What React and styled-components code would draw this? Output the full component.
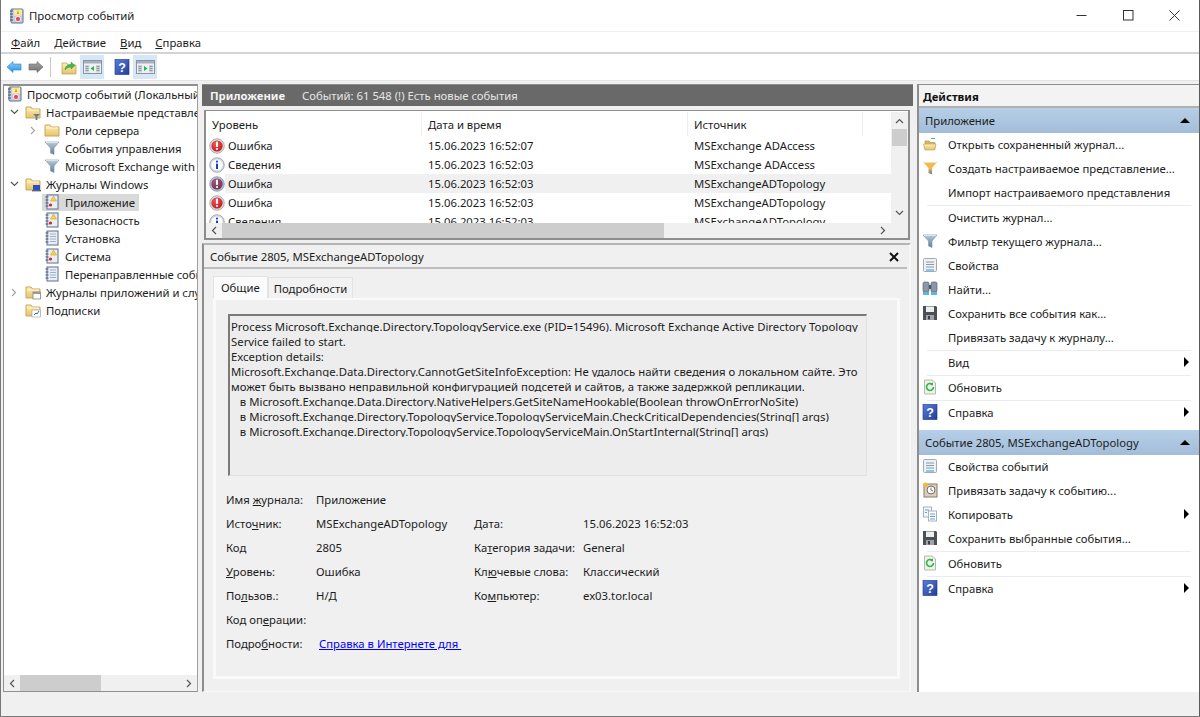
import React from 'react'
import styled, { createGlobalStyle } from 'styled-components'

const Global = createGlobalStyle`
  html, body { margin: 0; padding: 0; height: 100%; overflow: hidden; }
  body {
    font-family: "Noto Sans", "Open Sans", sans-serif;
    font-size: 11.3px;
    color: #1c1c1c;
    background: #f0f0f0;
  }
  u { text-underline-offset: 1px; }
`

const Win = styled.div`
  width: 1200px;
  height: 717px;
  display: flex;
  flex-direction: column;
  background: #f0f0f0;
  box-sizing: border-box;
  border-left: 1px solid #777;
  border-right: 1px solid #5a5a5a;
  border-bottom: 1px solid #7a7a7a;
  overflow: hidden;
`
const TitleBar = styled.div`
  height: 32px;
  flex: none;
  display: flex;
  align-items: center;
  padding-left: 8px;
  background: #fff;
  border-bottom: 1px solid #f0f0f0;
  box-sizing: border-box;
`
const TitleText = styled.span`
  margin-left: 4px;
  flex: 1;
  font-size: 11.4px;
`
const WinButtons = styled.div`
  display: flex;
  margin-right: 1px;
`
const WinButton = styled.div`
  width: 46.5px;
  height: 30px;
  display: flex;
  align-items: center;
  justify-content: center;
`
const MenuBar = styled.div`
  height: 22px;
  flex: none;
  display: flex;
  align-items: center;
  gap: 14px;
  padding-left: 10px;
  background: #fff;
  border-bottom: 2px solid #d4d4d4;
  box-sizing: border-box;
`
const Toolbar = styled.div`
  height: 27px;
  flex: none;
  display: flex;
  align-items: center;
  padding-left: 4px;
  background: #fff;
  border-bottom: 1px solid #e4e4e4;
  box-sizing: border-box;
`
const ToolIcon = styled.div`
  width: ${p => p.$w || 22}px;
  height: 24px;
  flex: none;
  display: flex;
  align-items: center;
  justify-content: center;
  background: ${p => (p.$on ? '#d6e8f8' : 'transparent')};
`
const ToolSep = styled.div`
  width: 1px;
  height: 20px;
  margin: 0 6px 0 2px;
  background: #c8c8c8;
`
const ToolGap = styled.div`
  width: ${p => p.$w}px;
  flex: none;
`
const Main = styled.div`
  flex: 1;
  min-height: 0;
  display: grid;
  grid-template-columns: 195px 711px 282px;
  column-gap: 4px;
  padding: 3px 0 0 2px;
  box-sizing: border-box;
`

/* left tree */
const TreePane = styled.div`
  height: 609px;
  display: flex;
  flex-direction: column;
  background: #fff;
  border: 1px solid #8f8f8f;
  border-top-width: 2px;
  border-bottom-width: 2px;
  border-right-color: #a0a0a0;
  box-sizing: border-box;
  overflow: hidden;
`
const TreeBody = styled.div`
  flex: 1;
  overflow: hidden;
`
const TreeRow = styled.div`
  height: 18px;
  display: flex;
  align-items: center;
  white-space: nowrap;
  padding: 0 0 2px ${p => p.$level * 19 + 2}px;
  box-sizing: border-box;
`
const Chevron = styled.div`
  width: 16px;
  height: 16px;
  margin-right: 1px;
  flex: none;
  display: flex;
  align-items: center;
  justify-content: center;
`
const TreeNode = styled.div`
  display: flex;
  align-items: center;
  gap: ${p => (p.$root ? 4 : 5)}px;
  height: 17px;
  padding: 0 ${p => (p.$sel ? 4 : 2)}px 0 ${p => (p.$root ? 1 : 2)}px;
  background: ${p => (p.$sel ? '#d9d9d9' : 'transparent')};
`
const HScroll = styled.div`
  height: ${p => p.$h}px;
  flex: none;
  display: flex;
  align-items: center;
  background: #f0f0f0;
`
const ScrollBtn = styled.div`
  width: 16px;
  height: 100%;
  flex: none;
  display: flex;
  align-items: center;
  justify-content: center;
`
const ScrollThumb = styled.div`
  height: 100%;
  flex: none;
  width: ${p => p.$w}px;
  background: #cdcdcd;
`
const Spacer = styled.div`
  flex: 1;
`

/* center */
const Center = styled.div`
  display: flex;
  flex-direction: column;
  height: 609px;
  min-width: 0;
`
const DarkBar = styled.div`
  height: 22px;
  flex: none;
  display: flex;
  align-items: center;
  gap: 17px;
  padding-left: 8px;
  background: #696969;
  color: #e6e6e6;
  border-top: 1px solid #8a8a8a;
  box-sizing: border-box;
`
const DarkTitle = styled.b`
  color: #f4f4f4;
  font-weight: 700;
`
const ListPane = styled.div`
  height: 130px;
  margin: 4px 3px 0 2px;
  flex: none;
  display: grid;
  grid-template-columns: 1fr 17px;
  grid-template-rows: 1fr 15px;
  background: #fff;
  border: 2px solid #8d8d8d;
  border-top: 1px solid #8d8d8d;
  padding-top: 1px;
  box-sizing: border-box;
`
const ListBody = styled.div`
  overflow: hidden;
  min-width: 0;
  min-height: 0;
`
const ListHead = styled.div`
  height: 24px;
  display: grid;
  grid-template-columns: 216px 266px 175px;
  align-items: start;
`
const HeadCell = styled.div`
  height: 24px;
  line-height: 26px;
  padding-left: 6px;
  border-right: 1px solid #eeeeee;
`
const ListRow = styled.div`
  height: 19px;
  display: grid;
  grid-template-columns: 216px 266px 1fr;
  align-items: center;
  white-space: nowrap;
`
const LevelCell = styled.div`
  display: flex;
  align-items: center;
  height: 19px;
  padding-left: 3px;
`
const LevelText = styled.span`
  flex: 1;
  padding-left: 3px;
  line-height: 19px;
  background: ${p => (p.$hl ? '#f0f0f0' : 'transparent')};
`
const Cell = styled.div`
  height: 19px;
  line-height: 19px;
  padding-left: 6px;
  background: ${p => (p.$hl ? '#f0f0f0' : 'transparent')};
`
const VScroll = styled.div`
  grid-row: 1 / 3;
  grid-column: 2;
  display: flex;
  flex-direction: column;
  align-items: center;
  background: #f0f0f0;
`
const VBtn = styled.div`
  height: 17px;
  width: 17px;
  flex: none;
  display: flex;
  align-items: center;
  justify-content: center;
`
const VThumb = styled.div`
  width: 15px;
  height: 17px;
  flex: none;
  background: #cdcdcd;
`

const DetailPane = styled.div`
  height: 449px;
  flex: none;
  margin: 3px 2px 0 0;
  display: flex;
  flex-direction: column;
  padding: 0 9px 0 0;
  background: #f0f0f0;
  border-left: 2px solid #8d8d8d;
  border-top: 2px solid #b4b4b4;
  border-right: 2px solid #f6f6f6;
  border-bottom: 1px solid #f8f8f8;
  box-sizing: border-box;
`
const DetailHead = styled.div`
  height: 21px;
  flex: none;
  display: flex;
  align-items: center;
  justify-content: space-between;
  padding: 1px 0 0 6px;
  margin-right: -7px;
  border-bottom: 2px solid #bdbdbd;
  box-sizing: content-box;
`
const CloseX = styled.div`
  width: 14px;
  height: 14px;
  display: flex;
  align-items: center;
  justify-content: center;
  margin-right: 6px;
`
const Tabs = styled.div`
  display: flex;
  align-items: flex-end;
  height: 22px;
  flex: none;
  margin: 7px 0 0 9px;
`
const Tab = styled.div`
  height: ${p => (p.$active ? 22 : 21)}px;
  line-height: ${p => (p.$active ? 21 : 22)}px;
  padding: 0 ${p => (p.$active ? 7 : 5)}px;
  background: ${p => (p.$active ? '#fbfbfb' : '#f2f2f2')};
  border: 1px solid #e3e3e3;
  border-bottom: 0;
  box-sizing: border-box;
`
const TabBody = styled.div`
  height: 381px;
  flex: none;
  margin-left: 9px;
  padding: 14px 0 0 12px;
  background: #f0f0f0;
  border: 1px solid #e6e6e6;
  border-right: 3px solid #fafafa;
  border-bottom: 3px solid #fafafa;
  border-left: 3px solid #fafafa;
  border-top: 2px solid #fafafa;
  box-sizing: border-box;
`
const MessageBox = styled.div`
  width: 639px;
  height: 162px;
  padding: 1px 1px 0 1px;
  background: #ededed;
  border: 1px solid #e2e2e2;
  border-top: 2px solid #7a7a7a;
  border-left: 2px solid #7a7a7a;
  box-sizing: border-box;
`
const MsgLine = styled.div`
  height: 15px;
  padding-top: 2px;
  line-height: 15px;
  font-size: 11.35px;
  white-space: pre;
  overflow: hidden;
  box-sizing: border-box;
`
const Fields = styled.div`
  display: grid;
  grid-template-columns: 90px 158px 109px 1fr;
  grid-auto-rows: 24px;
  align-items: center;
  margin: 11px 0 0 -2px;
  white-space: nowrap;
`
const Wide = styled.div`
  grid-column: 2 / 5;
`
const HelpLink = styled.a`
  color: #0000ff;
  text-decoration: underline;
  margin-left: 3px;
`

/* right */
const ActionsPane = styled.div`
  height: 609px;
  display: flex;
  flex-direction: column;
  background: #fff;
  border-left: 2px solid #8d8d8d;
  border-top: 1px solid #8d8d8d;
  box-sizing: border-box;
`
const ActionsTitle = styled.div`
  height: 19px;
  flex: none;
  display: flex;
  align-items: center;
  padding: 2px 0 0 4px;
  background: #f3f3f3;
  font-weight: 700;
  color: #111;
  border-bottom: 2px solid #b0b0b0;
  box-sizing: content-box;
`
const SectionHead = styled.div`
  height: 25px;
  flex: none;
  display: flex;
  align-items: center;
  justify-content: space-between;
  padding: 0 8px 0 6px;
  box-sizing: border-box;
  background: linear-gradient(#b6cfe8, #a3bdd9);
`
const Caret = styled.div`
  width: 0;
  height: 0;
  border-left: 5px solid transparent;
  border-right: 5px solid transparent;
  border-bottom: 5px solid #000;
  margin-right: 1px;
`
const ActionRow = styled.div`
  height: 24px;
  flex: none;
  display: flex;
  align-items: center;
  white-space: nowrap;
  padding: 0 10px 2px 0;
  box-sizing: border-box;
`
const ActionIcon = styled.div`
  width: 22px;
  margin-right: 7px;
  flex: none;
  display: flex;
  justify-content: center;
`
const ActionLabel = styled.span`
  flex: 1;
`
const SubArrow = styled.div`
  width: 0;
  height: 0;
  border-top: 5px solid transparent;
  border-bottom: 5px solid transparent;
  border-left: 5px solid #000;
`
const ActionSep = styled.div`
  height: 1px;
  flex: none;
  margin: 0 8px;
  background: #ececec;
`
const SectionGap = styled.div`
  height: 5px;
  flex: none;
`
const StatusBar = styled.div`
  height: 24px;
  flex: none;
  background: #f0f0f0;
`

/* icons */
const Svg = ({ s = 16, children }) => (
  <svg width={s} height={s} viewBox="0 0 16 16" style={{ flex: 'none', display: 'block' }}>{children}</svg>
)
const Defs = () => (
  <svg width="0" height="0" style={{ position: 'absolute' }}>
    <defs>
      <linearGradient id="fold" x1="0" y1="0" x2="0" y2="1">
        <stop offset="0" stopColor="#fdeeb4" /><stop offset="1" stopColor="#e6c36a" />
      </linearGradient>
      <linearGradient id="funnel" x1="0" y1="0" x2="0" y2="1">
        <stop offset="0" stopColor="#b9c9d6" /><stop offset="1" stopColor="#5f7f99" />
      </linearGradient>
      <linearGradient id="orfun" x1="0" y1="0" x2="0" y2="1">
        <stop offset="0" stopColor="#ffb52e" /><stop offset=".5" stopColor="#f3b84c" /><stop offset="1" stopColor="#5f7f99" />
      </linearGradient>
      <linearGradient id="help" x1="0" y1="0" x2="1" y2="1">
        <stop offset="0" stopColor="#5a7fd8" /><stop offset="1" stopColor="#1f3d9c" />
      </linearGradient>
      <radialGradient id="err" cx=".4" cy=".3" r=".8">
        <stop offset="0" stopColor="#f4585a" /><stop offset="1" stopColor="#c01218" />
      </radialGradient>
      <radialGradient id="errf" cx=".4" cy=".3" r=".8">
        <stop offset="0" stopColor="#a55a78" /><stop offset="1" stopColor="#6f2c50" />
      </radialGradient>
      <linearGradient id="arrow" x1="0" y1="0" x2="0" y2="1">
        <stop offset="0" stopColor="#8fd0fa" /><stop offset="1" stopColor="#2e8fe0" />
      </linearGradient>
      <linearGradient id="garrow" x1="0" y1="0" x2="0" y2="1">
        <stop offset="0" stopColor="#a8a8a8" /><stop offset="1" stopColor="#6e6e6e" />
      </linearGradient>
    </defs>
  </svg>
)
const ChevDown = () => (
  <svg width="9" height="6" viewBox="0 0 9 6"><path d="M1 1l3.5 3.5L8 1" fill="none" stroke="#555" strokeWidth="1.2" /></svg>
)
const ChevRight = ({ dark }) => (
  <svg width="6" height="9" viewBox="0 0 6 9"><path d="M1 1l3.5 3.5L1 8" fill="none" stroke={dark ? '#555' : '#a6a6a6'} strokeWidth="1.2" /></svg>
)
const ChevLeft = () => (
  <svg width="6" height="9" viewBox="0 0 6 9"><path d="M5 1L1.5 4.5 5 8" fill="none" stroke="#555" strokeWidth="1.2" /></svg>
)
const ChevUp = () => (
  <svg width="9" height="6" viewBox="0 0 9 6"><path d="M1 5l3.5-3.5L8 5" fill="none" stroke="#555" strokeWidth="1.2" /></svg>
)
const LogIcon = ({ warn }) => (
  <Svg>
    <rect x="3" y="1" width="11" height="14" fill="#e9edf5" stroke="#5d6f8e" />
    <path d="M1.5 3h3M1.5 6h3M1.5 9h3M1.5 12h3" stroke="#44546f" strokeWidth="1.2" />
    {!warn && <path d="M6 4h6M6 6.5h6M6 9h6M6 11.5h6" stroke="#9db2cc" />}
    {warn && <path d="M9.5 2l3 5h-6z" fill="#f7d33c" stroke="#c59a10" strokeWidth=".5" />}
    {warn && <circle cx="6.5" cy="11" r="1.6" fill="#d5202a" />}
  </Svg>
)
const RootIcon = () => (
  <Svg>
    <rect x="2" y="1" width="12" height="14" rx="1" fill="#c3cde0" stroke="#5d6f8e" />
    <path d="M1 3h3M1 6h3M1 9h3M1 12h3" stroke="#44546f" strokeWidth="1.2" />
    <rect x="5" y="1.6" width="8" height="6" fill="#f8eaa0" />
    <path d="M9 2l1.2 4H7.8z" fill="#d8a000" />
    <circle cx="9" cy="11" r="2.6" fill="#e24a52" stroke="#fff" strokeWidth=".8" />
  </Svg>
)
const FolderIcon = ({ children }) => (
  <Svg>
    <path d="M1 3h5l1.5 2H15v9H1z" fill="url(#fold)" stroke="#c9a75a" />
    <path d="M2 6h12" stroke="#fff6cf" />
    {children}
  </Svg>
)
const Funnel = ({ orange }) => (
  <Svg>
    <path d="M1 2h14L10 8v6.5L6.5 13V8z" fill={orange ? 'url(#orfun)' : 'url(#funnel)'} stroke={orange ? 'none' : '#7a95aa'} strokeWidth=".6" />
    <path d="M2 2.6h12" stroke="#dfe8ef" />
  </Svg>
)
const HelpIcon = () => (
  <Svg>
    <rect x="1" y="0.5" width="14" height="15" fill="url(#help)" stroke="#1a2f80" strokeWidth=".6" />
    <text x="8" y="12.5" textAnchor="middle" fontSize="12.5" fontWeight="700" fill="#fff" fontFamily="Liberation Sans">?</text>
  </Svg>
)
const PaneIcon = ({ dir }) => (
  <svg width="19" height="16" viewBox="0 0 19 16" style={{ display: 'block' }}>
    <rect x=".5" y="1.5" width="18" height="13" fill="#eef1f4" stroke="#8a95a3" />
    <rect x="1" y="2" width="17" height="2.5" fill="#a6b0bc" />
    <rect x="2" y="6" width="4" height="7.5" fill="#cdd5dd" />
    <rect x="13" y="6" width="4" height="7.5" fill="#cdd5dd" />
    <path d="M13.5 7.5h3M13.5 9.5h3M13.5 11.5h3M2.5 7.5h3M2.5 9.5h3M2.5 11.5h3" stroke="#8a95a3" />
    <path d={dir === 'left' ? 'M11 7v5l-3.5-2.5z' : 'M8 7v5l3.5-2.5z'} fill="#2db24a" />
  </svg>
)
const ErrorIcon = ({ faded }) => (
  <Svg>
    <circle cx="8" cy="8" r="7.3" fill={faded ? '#b4bdd2' : '#d8d8d8'} stroke={faded ? '#7f8bb0' : '#9a9a9a'} strokeWidth=".7" />
    <circle cx="8" cy="8" r="5.6" fill={faded ? 'url(#errf)' : 'url(#err)'} />
    <rect x="7" y="3.6" width="2" height="5.4" rx=".8" fill="#fff" />
    <circle cx="8" cy="11" r="1.1" fill="#fff" />
  </Svg>
)
const InfoIcon = () => (
  <Svg>
    <circle cx="8" cy="8" r="7.3" fill="#d4d8e0" stroke="#8d93a3" strokeWidth=".7" />
    <circle cx="8" cy="8" r="5.6" fill="#fff" />
    <rect x="7" y="6.6" width="2" height="5.4" fill="#1a3fc0" />
    <circle cx="8" cy="4.6" r="1.1" fill="#1a3fc0" />
  </Svg>
)
const OpenLog = () => (
  <Svg>
    <path d="M3 5h4l1 1.5h5V13H3z" fill="#d9b96a" stroke="#a88b45" strokeWidth=".6" />
    <path d="M1.5 8H14l-1.5 6H3z" fill="url(#fold)" stroke="#b89a55" strokeWidth=".6" />
    <path d="M9 2.5h4" stroke="#37d04a" />
  </Svg>
)
const PropsIcon = () => (
  <Svg>
    <rect x="1.5" y="1.5" width="13" height="13" rx="1" fill="#eef1f4" stroke="#a3a9b0" />
    <path d="M4 5h8M4 7.5h8M4 10h8" stroke="#8a9aaa" />
    <path d="M4 13h8" stroke="#5ab8ee" strokeWidth="1.4" />
  </Svg>
)
const Binoculars = () => (
  <Svg>
    <rect x="1" y="1" width="6" height="10" rx="1.5" fill="#8b97a4" stroke="#4c5662" strokeWidth=".6" />
    <rect x="9" y="1" width="6" height="10" rx="1.5" fill="#8b97a4" stroke="#4c5662" strokeWidth=".6" />
    <rect x="7" y="4" width="2" height="4" fill="#4c5662" />
    <rect x="1" y="11" width="6" height="3" fill="#5ab4ee" />
    <rect x="9" y="11" width="6" height="3" fill="#5ab4ee" />
  </Svg>
)
const Floppy = () => (
  <Svg>
    <path d="M1 1h13l1 1v13H1z" fill="#4b5054" />
    <rect x="4" y="1.5" width="8" height="5.5" fill="#eceff2" />
    <rect x="4" y="10" width="8" height="5" fill="#9ea4aa" />
    <rect x="6" y="11" width="2" height="3.4" fill="#3c4044" />
  </Svg>
)
const Refresh = () => (
  <Svg>
    <path d="M2.5 1h8l3 3v11h-11z" fill="#eef2ea" stroke="#b4bab0" />
    <path d="M11.5 8a3.5 3.5 0 1 1-1.2-2.7" fill="none" stroke="#34b24a" strokeWidth="1.6" />
    <path d="M11 3.2v3h-3z" fill="#34b24a" />
  </Svg>
)
const TaskIcon = () => (
  <Svg>
    <rect x="2" y="2" width="13" height="13" fill="#d8cfc4" stroke="#8b7a68" />
    <circle cx="9" cy="8" r="4" fill="#fff" stroke="#7a6a5a" />
    <path d="M9 5.5V8l2 1" fill="none" stroke="#555" strokeWidth=".8" />
    <circle cx="3.5" cy="3" r="2.4" fill="#f5b942" />
  </Svg>
)
const CopyIcon = () => (
  <Svg>
    <rect x="1.5" y="1" width="8" height="10" fill="#f4f6f8" stroke="#a9b2bc" />
    <rect x="6.5" y="5" width="8" height="10" fill="#fff" stroke="#a9b2bc" />
    <path d="M3 4h4M3 6.5h2M8 8h5M8 10.5h5M8 13h5" stroke="#5f9fd8" />
  </Svg>
)
const FolderUp = () => (
  <Svg>
    <path d="M1 4h5l1 2h8v9H1z" fill="url(#fold)" stroke="#b89a55" strokeWidth=".7" />
    <path d="M4 11c0-3.5 2.5-5.5 6-5.5V3l4 3.6-4 3.4V8C8 8 5.5 9 4 11z" fill="#3cba4c" stroke="#208a30" strokeWidth=".4" />
  </Svg>
)

const tree = [
  { level: 0, icon: <RootIcon />, text: 'Просмотр событий (Локальный', root: true },
  { level: 0, chev: 'down', icon: <FolderIcon><path d="M8 10h7l-2.6 2.6V16h-1.8v-3.4z" fill="#5f7f99" /></FolderIcon>, text: 'Настраиваемые представлен' },
  { level: 1, chev: 'right', icon: <FolderIcon />, text: 'Роли сервера' },
  { level: 1, icon: <Funnel />, text: 'События управления' },
  { level: 1, icon: <Funnel />, text: 'Microsoft Exchange with' },
  { level: 0, chev: 'down', icon: <FolderIcon><rect x="8" y="9" width="7" height="5" fill="#2a50c8" /><rect x="7" y="14" width="9" height="1.4" fill="#666" /></FolderIcon>, text: 'Журналы Windows' },
  { level: 1, icon: <LogIcon warn />, text: 'Приложение', sel: true },
  { level: 1, icon: <LogIcon warn />, text: 'Безопасность' },
  { level: 1, icon: <LogIcon />, text: 'Установка' },
  { level: 1, icon: <LogIcon warn />, text: 'Система' },
  { level: 1, icon: <LogIcon />, text: 'Перенаправленные собы' },
  { level: 0, chev: 'right', icon: <FolderIcon><rect x="8" y="8" width="7.5" height="7" fill="#fff" stroke="#777" strokeWidth=".7" /><rect x="8" y="8" width="7.5" height="2" fill="#999" /></FolderIcon>, text: 'Журналы приложений и слу' },
  { level: 0, icon: <FolderIcon><rect x="7" y="8" width="8.5" height="7" fill="#fff" stroke="#999" strokeWidth=".6" /><path d="M9 13l2-2 1 1 2-3" stroke="#2a6ad0" fill="none" /></FolderIcon>, text: 'Подписки' },
]

const events = [
  { kind: 'e', level: 'Ошибка', date: '15.06.2023 16:52:07', src: 'MSExchange ADAccess' },
  { kind: 'i', level: 'Сведения', date: '15.06.2023 16:52:03', src: 'MSExchange ADAccess' },
  { kind: 'e', level: 'Ошибка', date: '15.06.2023 16:52:03', src: 'MSExchangeADTopology', hl: true },
  { kind: 'e', level: 'Ошибка', date: '15.06.2023 16:52:03', src: 'MSExchangeADTopology' },
  { kind: 'i', level: 'Сведения', date: '15.06.2023 16:52:03', src: 'MSExchangeADTopology' },
]

const message = [
  'Process Microsoft.Exchange.Directory.TopologyService.exe (PID=15496). Microsoft Exchange Active Directory Topology',
  'Service failed to start.',
  'Exception details:',
  'Microsoft.Exchange.Data.Directory.CannotGetSiteInfoException: Не удалось найти сведения о локальном сайте. Это',
  'может быть вызвано неправильной конфигурацией подсетей и сайтов, а также задержкой репликации.',
  '   в Microsoft.Exchange.Data.Directory.NativeHelpers.GetSiteNameHookable(Boolean throwOnErrorNoSite)',
  '   в Microsoft.Exchange.Directory.TopologyService.TopologyServiceMain.CheckCriticalDependencies(String[] args)',
  '   в Microsoft.Exchange.Directory.TopologyService.TopologyServiceMain.OnStartInternal(String[] args)',
]

const actions1 = [
  { icon: <OpenLog />, text: 'Открыть сохраненный журнал...' },
  { icon: <Funnel orange />, text: 'Создать настраиваемое представление...' },
  { text: 'Импорт настраиваемого представления', sep: true },
  { text: 'Очистить журнал...' },
  { icon: <Funnel />, text: 'Фильтр текущего журнала...' },
  { icon: <PropsIcon />, text: 'Свойства' },
  { icon: <Binoculars />, text: 'Найти...' },
  { icon: <Floppy />, text: 'Сохранить все события как...' },
  { text: 'Привязать задачу к журналу...', sep: true },
  { text: 'Вид', sub: true, sep: true },
  { icon: <Refresh />, text: 'Обновить', sep: true },
  { icon: <HelpIcon />, text: 'Справка', sub: true },
]
const actions2 = [
  { icon: <PropsIcon />, text: 'Свойства событий' },
  { icon: <TaskIcon />, text: 'Привязать задачу к событию...' },
  { icon: <CopyIcon />, text: 'Копировать', sub: true },
  { icon: <Floppy />, text: 'Сохранить выбранные события...', sep: true },
  { icon: <Refresh />, text: 'Обновить', sep: true },
  { icon: <HelpIcon />, text: 'Справка', sub: true },
]

const ActionList = ({ items }) =>
  items.map(a => (
    <React.Fragment key={a.text}>
      <ActionRow>
        <ActionIcon>{a.icon}</ActionIcon>
        <ActionLabel>{a.text}</ActionLabel>
        {a.sub && <SubArrow />}
      </ActionRow>
      {a.sep && <ActionSep />}
    </React.Fragment>
  ))

export default function App() {
  return (
    <Win>
      <Global />
      <Defs />
      <TitleBar>
        <RootIcon />
        <TitleText>Просмотр событий</TitleText>
        <WinButtons>
          <WinButton><svg width="11" height="11" viewBox="0 0 11 11"><path d="M.5 5.5h10" stroke="#333" /></svg></WinButton>
          <WinButton><svg width="11" height="11" viewBox="0 0 11 11"><rect x=".5" y=".5" width="9.5" height="9.5" fill="none" stroke="#333" /></svg></WinButton>
          <WinButton><svg width="11" height="11" viewBox="0 0 11 11"><path d="M.5.5l10 10M10.5.5l-10 10" stroke="#333" /></svg></WinButton>
        </WinButtons>
      </TitleBar>
      <MenuBar>
        <span><u>Ф</u>айл</span>
        <span><u>Д</u>ействие</span>
        <span><u>В</u>ид</span>
        <span><u>С</u>правка</span>
      </MenuBar>
      <Toolbar>
        <ToolIcon $w={18}><Svg><path d="M1 8l6-5.5V5h8v6H7v2.5z" fill="url(#arrow)" stroke="#2a7fd0" strokeWidth=".6" /></Svg></ToolIcon>
        <ToolIcon $w={25}><Svg><path d="M15 8L9 2.5V5H1v6h8v2.5z" fill="url(#garrow)" stroke="#6a6a6a" strokeWidth=".6" /></Svg></ToolIcon>
        <ToolSep />
        <ToolIcon $w={23}><FolderUp /></ToolIcon>
        <ToolIcon $w={24} $on><PaneIcon dir="left" /></ToolIcon>
        <ToolGap $w={6} />
        <ToolIcon $w={23}><HelpIcon /></ToolIcon>
        <ToolIcon $w={24} $on><PaneIcon dir="right" /></ToolIcon>
      </Toolbar>
      <Main>
        <TreePane>
          <TreeBody>
            {tree.map(t => (
              <TreeRow key={t.text} $level={t.level}>
                {!t.root && (
                  <Chevron>{t.chev === 'down' ? <ChevDown /> : t.chev === 'right' ? <ChevRight /> : null}</Chevron>
                )}
                <TreeNode $sel={t.sel} $root={t.root}>
                  {t.icon}
                  <span>{t.text}</span>
                </TreeNode>
              </TreeRow>
            ))}
          </TreeBody>
          <HScroll $h={16}>
            <ScrollBtn><ChevLeft /></ScrollBtn>
            <ScrollThumb $w={81} />
            <Spacer />
            <ScrollBtn><ChevRight dark /></ScrollBtn>
          </HScroll>
        </TreePane>
        <Center>
          <DarkBar>
            <DarkTitle>Приложение</DarkTitle>
            <span>Событий: 61 548 (!) Есть новые события</span>
          </DarkBar>
          <ListPane>
            <ListBody>
              <ListHead>
                <HeadCell>Уровень</HeadCell>
                <HeadCell>Дата и время</HeadCell>
                <HeadCell>Источник</HeadCell>
              </ListHead>
              {events.map((e, i) => (
                <ListRow key={i}>
                  <LevelCell>
                    {e.kind === 'e' ? <ErrorIcon faded={e.hl} /> : <InfoIcon />}
                    <LevelText $hl={e.hl}>{e.level}</LevelText>
                  </LevelCell>
                  <Cell $hl={e.hl}>{e.date}</Cell>
                  <Cell $hl={e.hl}>{e.src}</Cell>
                </ListRow>
              ))}
            </ListBody>
            <VScroll>
              <VBtn><ChevUp /></VBtn>
              <VThumb />
              <Spacer />
              <VBtn><ChevDown /></VBtn>
              <VBtn />
            </VScroll>
            <HScroll $h={15}>
              <ScrollBtn><ChevLeft /></ScrollBtn>
              <ScrollThumb $w={442} />
              <Spacer />
              <ScrollBtn><ChevRight dark /></ScrollBtn>
            </HScroll>
          </ListPane>
          <DetailPane>
            <DetailHead>
              <span>Событие 2805, MSExchangeADTopology</span>
              <CloseX><svg width="10" height="10" viewBox="0 0 10 10"><path d="M1 1l8 8M9 1l-8 8" stroke="#111" strokeWidth="2" /></svg></CloseX>
            </DetailHead>
            <Tabs>
              <Tab $active>Общие</Tab>
              <Tab>Подробности</Tab>
            </Tabs>
            <TabBody>
              <MessageBox>
                {message.map((m, i) => <MsgLine key={i}>{m}</MsgLine>)}
              </MessageBox>
              <Fields>
                <div>Имя <u>ж</u>урнала:</div><Wide>Приложение</Wide>
                <div>Исто<u>ч</u>ник:</div><div>MSExchangeADTopology</div><div><u>Д</u>ата:</div><div>15.06.2023 16:52:03</div>
                <div>Код</div><div>2805</div><div>Ка<u>т</u>егория задачи:</div><div>General</div>
                <div><u>У</u>ровень:</div><div>Ошибка</div><div>Кл<u>ю</u>чевые слова:</div><div>Классический</div>
                <div>По<u>л</u>ьзов.:</div><div>Н/Д</div><div>Ко<u>м</u>пьютер:</div><div>ex03.tor.local</div>
                <div>Код оп<u>е</u>рации:</div><Wide />
                <div>Подро<u>б</u>ности:</div><Wide><HelpLink>Справка в Интернете для&nbsp;</HelpLink></Wide>
              </Fields>
            </TabBody>
          </DetailPane>
        </Center>
        <ActionsPane>
          <ActionsTitle>Действия</ActionsTitle>
          <SectionHead>Приложение<Caret /></SectionHead>
          <ActionList items={actions1} />
          <SectionGap />
          <SectionHead>Событие 2805, MSExchangeADTopology<Caret /></SectionHead>
          <ActionList items={actions2} />
        </ActionsPane>
      </Main>
      <StatusBar />
    </Win>
  )
}
